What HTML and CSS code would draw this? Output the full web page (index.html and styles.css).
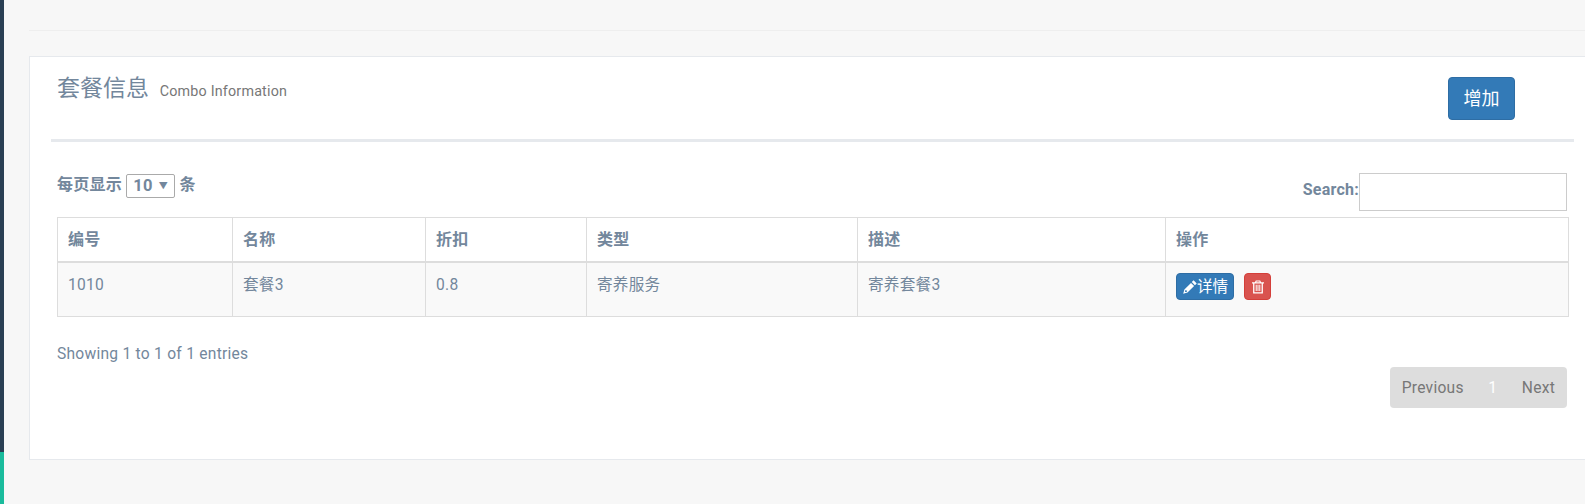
FILE: index.html
```html
<!DOCTYPE html>
<html>
<head>
	<meta charset="utf-8">
	<title>套餐信息</title>
	<link rel="stylesheet" href="styles.css">
</head>
<body>
<div class="sidebar">
	<div class="sidebar-top"></div>
	<div class="sidebar-bottom"></div>
</div>
<div class="main">
	<div class="top-rule"></div>
	<div class="panel">
		<div class="panel-title">
			<h2>套餐信息 <small>Combo Information</small></h2>
			<a href="javascript:;" class="btn btn-add">增加</a>
		</div>
		<div class="panel-body">
			<div class="table-tools">
				<div class="length">每页显示 <span class="fake-select">10<i>▼</i></span> 条</div>
				<div class="search"><span class="search-label">Search:</span><input type="text"></div>
			</div>
			<table class="data-table">
				<colgroup>
					<col class="col-id">
					<col class="col-name">
					<col class="col-off">
					<col class="col-type">
					<col class="col-desc">
					<col class="col-op">
				</colgroup>
				<thead>
					<tr>
						<th>编号</th>
						<th>名称</th>
						<th>折扣</th>
						<th>类型</th>
						<th>描述</th>
						<th>操作</th>
					</tr>
				</thead>
				<tbody>
					<tr>
						<td>1010</td>
						<td>套餐3</td>
						<td>0.8</td>
						<td>寄养服务</td>
						<td>寄养套餐3</td>
						<td class="ops">
							<a href="javascript:;" class="btn btn-sm btn-info"><svg class="icon" viewBox="0 0 14 14"><path d="M10.6.3 13.700 3.400 11.900 5.200 8.800 2.100zM8 2.900 11.100 6 4.500 12.600.2 13.800 1.400 9.500zM2.300 10 1.900 12.100 4 11.700 4.100 10.600 3 10.500z" fill-rule="evenodd"/></svg>详情</a>
							<a href="javascript:;" class="btn btn-sm btn-del"><svg class="icon" viewBox="0 0 14 14"><path d="M4.800.5h4.400l.9 1.700H13v1.400h-1.100V13.500H2.100V3.600H1V2.200h2.900zM5.600 1.500 5.200 2.200h3.600L8.400 1.500zM3.400 3.600V12.200h7.200V3.600zM4.700 4.800h1v6.200h-1zM6.500 4.800h1v6.200h-1zM8.300 4.800h1v6.200h-1z" fill-rule="evenodd"/></svg></a>
						</td>
					</tr>
				</tbody>
			</table>
			<div class="table-info">Showing 1 to 1 of 1 entries</div>
			<div class="pager-row">
				<div class="pager">
					<a href="javascript:;">Previous</a>
					<a href="javascript:;" class="current">1</a>
					<a href="javascript:;">Next</a>
				</div>
			</div>
		</div>
	</div>
</div>
</body>
</html>
```

FILE: styles.css
```css
* {
	box-sizing: border-box;
}
html, body {
	height: 100%;
}
body {
	margin: 0;
	display: flex;
	overflow: hidden;
	background: #f7f7f7;
	color: #73879c;
	font-family: Roboto, "Noto Sans CJK SC", sans-serif;
	font-size: 15.6px;
	letter-spacing: .25px;
}
a {
	text-decoration: none;
}
.sidebar {
	width: 4px;
	flex: none;
	display: flex;
	flex-direction: column;
}
.sidebar-top {
	height: 452px;
	background: #2a3f54;
}
.sidebar-bottom {
	flex: 1;
	background: #1abb9c;
}
.main {
	flex: none;
	width: 1581px;
	padding: 30px 0 0 25px;
}
.top-rule {
	height: 1px;
	background: #eeeeee;
}
.panel {
	width: 1570px;
	height: 404px;
	margin-top: 25px;
	padding: 0 24px 0 21px;
	background: #fff;
	border: 1px solid #e6e9ed;
}
.panel-title {
	height: 85px;
	display: flex;
	justify-content: space-between;
	align-items: flex-start;
	padding: 20px 59px 0 6px;
	border-bottom: 3px solid #e6e9ed;
}
.panel-title h2 {
	margin: -4px 0 0;
	font-size: 23px;
	font-weight: 400;
	line-height: 32px;
	letter-spacing: 0;
}
.panel-title small {
	margin-left: 5px;
	font-size: 14.3px;
	letter-spacing: .2px;
	color: #777777;
}
.btn {
	display: inline-block;
	color: #fff;
	border-radius: 4px;
	border: 1px solid #2e6da4;
	background: #337ab7;
	letter-spacing: 0;
}
.btn-add {
	width: 67px;
	height: 43px;
	line-height: 41px;
	text-align: center;
	font-size: 18px;
}
.panel-body {
	padding: 0 0 0 6px;
}
.table-tools {
	display: flex;
	justify-content: space-between;
	height: 75px;
	width: 1510px;
	padding-top: 31px;
	font-size: 16px;
	font-weight: 700;
}
.length {
	line-height: 24px;
}
.fake-select {
	display: inline-block;
	width: 49px;
	height: 24px;
	margin-top: 1px;
	line-height: 22px;
	padding-left: 6px;
	vertical-align: top;
	font-size: 16.5px;
	border: 1px solid #aaaaaa;
	border-radius: 2px;
}
.fake-select i {
	margin-left: 6px;
	font-size: 9px;
	font-style: normal;
	vertical-align: 2px;
}
.search {
	display: flex;
	height: 38px;
}
.search-label {
	line-height: 34px;
}
.search input {
	width: 208px;
	height: 38px;
	border: 1px solid #cccccc;
	background: #fff;
}
.data-table {
	width: 1512px;
	table-layout: fixed;
	border-collapse: collapse;
}
.col-id { width: 175px; }
.col-name { width: 193px; }
.col-off { width: 161px; }
.col-type { width: 271px; }
.col-desc { width: 308px; }
.data-table th,
.data-table td {
	padding: 0 10px;
	border: 1px solid #dddddd;
	text-align: left;
	vertical-align: top;
}
.data-table th {
	height: 44px;
	padding-top: 2px;
	line-height: 39px;
	font-size: 16px;
	font-weight: 700;
	border-bottom-width: 2px;
}
.data-table td {
	height: 55px;
	padding-top: 9px;
	line-height: 27px;
	background: #f9f9f9;
}
.data-table td.ops {
	padding-top: 10px;
}
.btn-sm {
	height: 27px;
	line-height: 26px;
	font-size: 15.6px;
	vertical-align: top;
}
.btn-info {
	width: 58px;
	padding-left: 6px;
	white-space: nowrap;
}
.btn-del {
	width: 27px;
	margin-left: 6px;
	text-align: center;
	background: #d9534f;
	border-color: #d43f3a;
}
.icon {
	width: 14px;
	height: 14px;
	fill: #fff;
	vertical-align: -2px;
}
.table-info {
	padding-top: 25px;
	line-height: 24px;
}
.pager-row {
	display: flex;
	width: 1510px;
	justify-content: flex-end;
	padding-top: 1px;
}
.pager {
	display: flex;
	height: 41px;
	align-items: center;
	padding: 1px 12px 0;
	gap: 24.5px;
	background: #dddddd;
	border-radius: 4px;
}
.pager a {
	color: #777777;
}
.pager a.current {
	color: #fff;
}
```
